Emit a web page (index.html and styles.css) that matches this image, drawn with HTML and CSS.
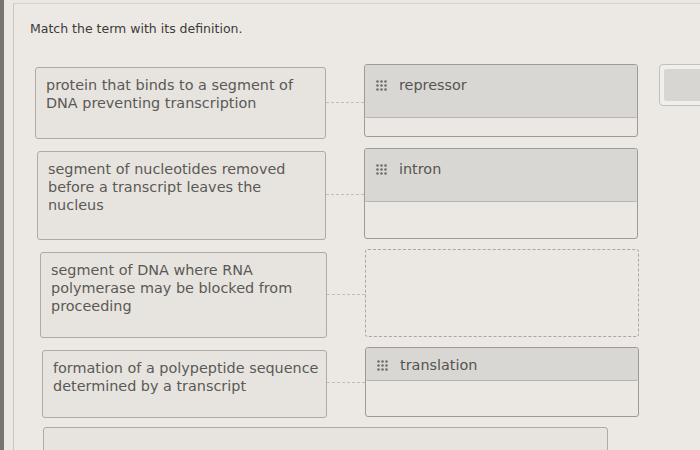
FILE: index.html
```html
<!DOCTYPE html>
<html>
<head>
<meta charset="utf-8">
<link rel="stylesheet" href="styles.css">
</head>
<body>
<div class="frame">
  <div class="edge"></div>
  <div class="panel">
    <p class="title">Match the term with its definition.</p>
    <div class="rows">
      <div class="row r1">
        <div class="def">protein that binds to a segment of DNA preventing transcription</div>
        <div class="link"></div>
        <div class="slot">
          <div class="tile t-tall"><svg class="grip" viewBox="0 0 11 11"><g fill="#6f6e6b"><circle cx="1.5" cy="1.5" r="1.3"/><circle cx="5.5" cy="1.5" r="1.3"/><circle cx="9.5" cy="1.5" r="1.3"/><circle cx="1.5" cy="5.5" r="1.3"/><circle cx="5.5" cy="5.5" r="1.3"/><circle cx="9.5" cy="5.5" r="1.3"/><circle cx="1.5" cy="9.5" r="1.3"/><circle cx="5.5" cy="9.5" r="1.3"/><circle cx="9.5" cy="9.5" r="1.3"/></g></svg><span>repressor</span></div>
        </div>
      </div>
      <div class="row r2">
        <div class="def">segment of nucleotides removed before a transcript leaves the nucleus</div>
        <div class="link"></div>
        <div class="slot">
          <div class="tile t-tall"><svg class="grip" viewBox="0 0 11 11"><g fill="#6f6e6b"><circle cx="1.5" cy="1.5" r="1.3"/><circle cx="5.5" cy="1.5" r="1.3"/><circle cx="9.5" cy="1.5" r="1.3"/><circle cx="1.5" cy="5.5" r="1.3"/><circle cx="5.5" cy="5.5" r="1.3"/><circle cx="9.5" cy="5.5" r="1.3"/><circle cx="1.5" cy="9.5" r="1.3"/><circle cx="5.5" cy="9.5" r="1.3"/><circle cx="9.5" cy="9.5" r="1.3"/></g></svg><span>intron</span></div>
        </div>
      </div>
      <div class="row r3">
        <div class="def">segment of DNA where RNA polymerase may be blocked from proceeding</div>
        <div class="link"></div>
        <div class="slot empty"></div>
      </div>
      <div class="row r4">
        <div class="def">formation of a polypeptide sequence determined by a transcript</div>
        <div class="link"></div>
        <div class="slot">
          <div class="tile t-short"><svg class="grip" viewBox="0 0 11 11"><g fill="#6f6e6b"><circle cx="1.5" cy="1.5" r="1.3"/><circle cx="5.5" cy="1.5" r="1.3"/><circle cx="9.5" cy="1.5" r="1.3"/><circle cx="1.5" cy="5.5" r="1.3"/><circle cx="5.5" cy="5.5" r="1.3"/><circle cx="9.5" cy="5.5" r="1.3"/><circle cx="1.5" cy="9.5" r="1.3"/><circle cx="5.5" cy="9.5" r="1.3"/><circle cx="9.5" cy="9.5" r="1.3"/></g></svg><span>translation</span></div>
        </div>
      </div>
      <div class="row r5">
        <div class="def wide"></div>
      </div>
    </div>
    <div class="bank"><div class="bank-tile"></div></div>
  </div>
</div>
</body>
</html>
```

FILE: styles.css
```css
html, body {
  margin: 0;
  padding: 0;
  width: 700px;
  height: 450px;
  overflow: hidden;
  background: #ebe8e3;
}
.frame {
  display: flex;
  height: 450px;
  font-family: "DejaVu Sans", "Open Sans", sans-serif;
  color: #4a4947;
}
.edge {
  width: 4px;
  background: #77746f;
  flex: none;
}
.panel {
  position: relative;
  flex: 1;
  margin-left: 9px;
  margin-top: 3px;
  border-left: 1px solid #c9c6c0;
  border-top: 1px solid #d6d3ce;
  background: #ece9e4;
  padding-left: 16px;
}
.title {
  margin: 16px 0 0 0;
  font-size: 12.5px;
  line-height: 18px;
  color: #3c3b39;
}
.rows {
  margin-top: 26px;
  display: flex;
  flex-direction: column;
  gap: 9px;
}
.row {
  display: flex;
  align-items: flex-start;
}
.def {
  box-sizing: border-box;
  width: 291px;
  margin-top: 3px;
  margin-left: 5px;
  padding: 8px 6px 8px 10px;
  border: 1px solid #aeaba6;
  border-radius: 3px;
  background: #e7e4df;
  font-size: 14.4px;
  line-height: 18px;
  color: #5a5956;
}
.r1 .def { height: 72px; }
.r2 .def { height: 89px; margin-left: 7px; width: 289px; }
.r3 .def { height: 86px; margin-left: 10px; width: 287px; }
.r4 .def { height: 68px; margin-left: 12px; width: 285px; padding-right: 2px; }
.r5 .def.wide { height: 30px; margin-left: 13px; width: 565px; margin-top: 0; }
.link {
  width: 38px;
  height: 0;
  border-top: 1px dashed #c1beb9;
  margin-top: 38px;
  flex: none;
}
.r2 .link { margin-top: 46px; }
.r3 .link { margin-top: 45px; }
.r4 .link { margin-top: 35px; }
.slot {
  box-sizing: border-box;
  width: 274px;
  border: 1px solid #9e9b97;
  border-radius: 3px;
  background: #ebe8e3;
  overflow: hidden;
}
.r1 .slot { height: 73px; }
.r2 .slot { height: 91px; }
.r3 .slot { height: 88px; }
.r4 .slot { height: 70px; }
.slot.empty {
  border: 1px dashed #aaa7a2;
}
.tile {
  box-sizing: border-box;
  display: flex;
  align-items: flex-start;
  gap: 12px;
  padding: 11px 0 0 11px;
  background: #d9d7d3;
  border-bottom: 1px solid #b7b4b0;
  border-radius: 2px;
  font-size: 14.4px;
  line-height: 18px;
  color: #555451;
}
.t-tall { height: 53px; }
.t-short { height: 33px; padding-top: 8px; }
.grip {
  width: 11px;
  height: 11px;
  margin-top: 4px;
  flex: none;
}
.bank {
  position: absolute;
  left: 645px;
  top: 60px;
  width: 60px;
  height: 42px;
  box-sizing: border-box;
  border: 1px solid #c3c0bb;
  border-radius: 4px;
  background: #f1efeb;
  padding: 4px;
}
.bank-tile {
  height: 100%;
  background: #d8d6d2;
  border-radius: 2px;
}
```
